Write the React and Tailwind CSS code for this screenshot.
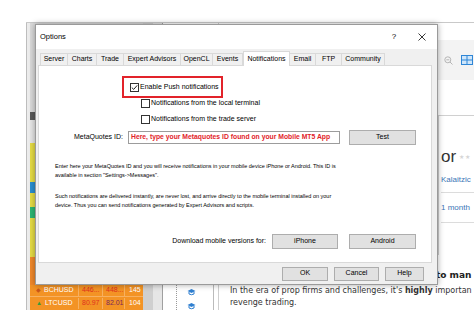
import React from "react";

const tabs = [
  { label: "Server", w: "w-[28px]" },
  { label: "Charts", w: "w-[29px]" },
  { label: "Trade", w: "w-[27px]" },
  { label: "Expert Advisors", w: "w-[57px]" },
  { label: "OpenCL", w: "w-[32px]" },
  { label: "Events", w: "w-[30px]" },
  { label: "Notifications", w: "w-[47px]", active: true },
  { label: "Email", w: "w-[26px]" },
  { label: "FTP", w: "w-[26px]" },
  { label: "Community", w: "w-[43px]" },
];

const watchRows = [
  { h: "h-[89px]", bg: "bg-[#dadada]" },
  { h: "h-[8px]", bg: "bg-[#5a5a5a]" },
  { h: "h-[23px]", bg: "bg-[#e6e6e6]" },
  { h: "h-[39px]", bg: "bg-[#e5dc45]" },
  { h: "h-[11px]", bg: "bg-[#2a8fd0]" },
  { h: "h-[14px]", bg: "bg-[#e5dc45]" },
  { h: "h-[11px]", bg: "bg-[#2bb673]" },
  { h: "h-[39px]", bg: "bg-[#e5dc45]" },
  { h: "h-[28px]", bg: "bg-[#f0882a]" },
];

function CheckBox({ checked }) {
  return (
    <span className="w-[9px] h-[9px] border border-[#333] bg-white flex items-center justify-center shrink-0">
      {checked && (
        <svg width="7" height="7" viewBox="0 0 7 7">
          <path d="M0.8 3.6 L2.7 5.4 L6.2 1.4" stroke="#222" strokeWidth="1" fill="none" />
        </svg>
      )}
    </span>
  );
}

function Btn({ children, className = "" }) {
  return (
    <div className={"flex items-center justify-center shrink-0 bg-[#e1e1e1] border border-[#adadad] text-[7px] text-black " + className}>
      {children}
    </div>
  );
}

function OptionsDialog() {
  return (
    <div className="absolute left-[35px] top-[24px] w-[403px] h-[261px] flex flex-col bg-[#f0f0f0] border border-[#9a9a9a] shadow-[0_0_6px_rgba(0,0,0,0.35)]">
      <div className="h-[24px] bg-white flex items-center pl-[4px] text-[7.5px] text-black">
        <span>Options</span>
        <span className="ml-auto w-[10px] text-center text-[8px]">?</span>
        <span className="ml-[18px] mr-[10px] w-[10px] flex justify-center">
          <svg width="8" height="8" viewBox="0 0 8 8">
            <path d="M0.5 0.5 L7.5 7.5 M7.5 0.5 L0.5 7.5" stroke="#222" strokeWidth="0.9" />
          </svg>
        </span>
      </div>

      <div className="flex-1 flex flex-col pl-[2px] pr-[5px]">
        <div className="flex items-end h-[15px] mt-[1px] pl-[2px]">
          {tabs.map((t) =>
            t.active ? (
              <div key={t.label} className={t.w + " h-[15px] -mb-[1px] bg-white border border-b-0 border-[#d9d9d9] flex items-center justify-center text-[7px] text-black relative z-10"}>
                {t.label}
              </div>
            ) : (
              <div key={t.label} className={t.w + " h-[12px] bg-[#f0f0f0] border border-l-0 first:border-l border-b-0 border-[#d9d9d9] flex items-center justify-center text-[7px] text-black"}>
                {t.label}
              </div>
            )
          )}
        </div>

        <div className="h-[198px] bg-white border border-[#d9d9d9] flex flex-col pt-[10px] text-black">
          <div className="ml-[83px] w-[101px] h-[22px] border-2 border-[#e2232a] flex items-center pl-[6px] gap-[1px] text-[7px]">
            <CheckBox checked />
            <span>Enable Push notifications</span>
          </div>
          <div className="ml-[102px] h-[10px] flex items-center gap-[1px] text-[7px]">
            <CheckBox />
            <span>Notifications from the local terminal</span>
          </div>
          <div className="ml-[102px] mt-[6px] h-[10px] flex items-center gap-[1px] text-[7px]">
            <CheckBox />
            <span>Notifications from the trade server</span>
          </div>
          <div className="mt-[6px] h-[15px] flex items-center text-[7px]">
            <span className="w-[84px] text-right">MetaQuotes ID:</span>
            <div className="ml-[5px] w-[212px] h-[13px] border border-[#9c9c9c] bg-white flex items-center pl-[2px] text-[6.8px] font-bold text-[#e2232a] whitespace-nowrap overflow-hidden">
              Here, type your Metaquotes ID found on your Mobile MT5 App
            </div>
            <Btn className="ml-[9px] w-[67px] h-[15px]">Test</Btn>
          </div>
          <p className="mt-[17px] pl-[16px] text-[5.5px] leading-[9px] whitespace-nowrap">
            Enter here your MetaQuotes ID and you will receive notifications in your mobile device iPhone or Android. This ID is
            <br />
            available in section "Settings-&gt;Messages".
          </p>
          <p className="mt-[12px] pl-[16px] text-[5.5px] leading-[9px] whitespace-nowrap">
            Such notifications are delivered instantly, are never lost, and arrive directly to the mobile terminal installed on your
            <br />
            device. Thus you can send notifications generated by Expert Advisors and scripts.
          </p>
          <div className="mt-[24px] h-[15px] flex items-center text-[7px]">
            <span className="w-[227px] text-right">Download mobile versions for:</span>
            <Btn className="ml-[6px] w-[66px] h-[15px]">iPhone</Btn>
            <Btn className="ml-[11px] w-[67px] h-[15px]">Android</Btn>
          </div>
        </div>

        <div className="flex-1 flex items-center justify-end pr-[8px] gap-[6px]">
          <Btn className="w-[46px] h-[14px] border-[#0078d7] border-[1.5px]">OK</Btn>
          <Btn className="w-[45px] h-[14px]">Cancel</Btn>
          <Btn className="w-[39px] h-[14px]">Help</Btn>
        </div>
      </div>
    </div>
  );
}

function MarketWatch() {
  return (
    <div className="w-[113px] shrink-0 flex flex-col">
      {watchRows.map((r, i) => (
        <div key={i} className={r.h + " " + r.bg} />
      ))}
      <div className="h-[12px] bg-[#f39325] grid grid-cols-[48px_24px_22px_19px] text-[7px] items-center border-b border-[#f7b060]">
        <span className="flex items-center gap-[3px] pl-[6px] text-white">
          <span className="text-[#c9561a] text-[6px]">◆</span>BCHUSD
        </span>
        <span className="pl-[3px] text-[#e0321e] border-l border-[#f7b060]">446...</span>
        <span className="pl-[3px] text-[#e0321e] border-l border-[#f7b060]">448...</span>
        <span className="pl-[4px] text-white border-l border-[#f7b060]">145</span>
      </div>
      <div className="h-[13px] bg-[#f39325] grid grid-cols-[48px_24px_22px_19px] text-[7px] items-center">
        <span className="flex items-center gap-[3px] pl-[6px] text-white">
          <span className="text-[#3a9a3a] text-[6px]">▲</span>LTCUSD
        </span>
        <span className="pl-[3px] text-[#e0321e] border-l border-[#f7b060]">80.97</span>
        <span className="pl-[3px] text-[#7a2a5a] border-l border-[#f7b060]">82.01</span>
        <span className="pl-[4px] text-white border-l border-[#f7b060]">104</span>
      </div>
    </div>
  );
}

function Cap() {
  return (
    <svg width="9" height="8" viewBox="0 0 9 8">
      <path d="M0.5 3 L4.5 1 L8.5 3 L4.5 5 Z" fill="#2f7fd0" />
      <path d="M2 4 L2 6 Q4.5 7.5 7 6 L7 4" fill="none" stroke="#2f7fd0" strokeWidth="1" />
    </svg>
  );
}

export default function App() {
  return (
    <div className="relative w-[474px] h-[310px] overflow-hidden bg-white font-['Liberation_Sans',Arial,sans-serif]">
      <div className="flex flex-col h-full">
        <div className="h-[22px]" />
        <div className="flex flex-1 min-h-0 ml-[26px] border-t border-[#c9c9c9]">
          <div className="flex w-[192px] shrink-0 border-l border-[#bdbdbd]">
            <div className="w-[3px] shrink-0 bg-[#ececec]" />
            <MarketWatch />
            <div className="w-[10px] shrink-0 bg-[#cfcfcf]" />
            <div className="w-[10px] shrink-0 bg-[#e6e6e6] border-r border-[#a0a0a0]" />
            <div className="flex-1 flex flex-col justify-end bg-white">
              <div className="flex h-[25px]">
                <div className="ml-[13px] w-[1px] border-l border-dotted border-[#999]" />
                <div className="ml-[10px] flex flex-col gap-[6px] pt-[3px]">
                  <Cap />
                  <Cap />
                </div>
                <div className="ml-auto mr-[4px] w-[1px] bg-[#bbb]" />
              </div>
            </div>
          </div>

          <div className="flex-1 min-w-0 overflow-hidden flex flex-col border-l border-[#cfcfcf]">
            <div className="h-[17px] shrink-0" />
            <div className="h-[40px] shrink-0 bg-[#f3f3f3] flex items-center pl-[225px] gap-[8px]">
              <svg width="9" height="9" viewBox="0 0 9 9" className="shrink-0">
                <circle cx="3.8" cy="3.8" r="3" fill="none" stroke="#b5b5b5" strokeWidth="1" />
                <path d="M2.3 3.8 H5.3 M6 6 L8.5 8.5" stroke="#b5b5b5" strokeWidth="1" />
              </svg>
              <svg width="12" height="10" viewBox="0 0 12 10" className="shrink-0">
                <rect x="0.5" y="0.5" width="11" height="9" fill="#cfe6fa" stroke="#2f86d6" />
                <path d="M6 0.5 V9.5 M0.5 5 H11.5" stroke="#2f86d6" />
              </svg>
            </div>
            <div className="h-[35px] shrink-0" />
            <div className="ml-[219px] w-[40px] h-[140px] shrink-0 border-t border-l border-[#d0d0d0] flex flex-col pl-[2px]">
              <div className="mt-[33px] flex items-center gap-[3px] whitespace-nowrap">
                <span className="text-[17px] leading-[16px] text-[#333]">or</span>
                <span className="text-[6px] text-[#d6d6d6] tracking-[1px]">★★</span>
              </div>
              <div className="mt-[9px] text-[8px] text-[#3b76b6] whitespace-nowrap">Kalaitzic</div>
              <div className="mt-[6px] h-px bg-[#dcdcdc]" />
              <div className="mt-[9px] text-[8px] text-[#3b76b6] whitespace-nowrap">1 month</div>
              <div className="mt-[8px] h-px bg-[#dcdcdc]" />
            </div>
            <div className="mt-[14px] pl-[217px] text-[9px] leading-[12px] font-bold text-[#222] whitespace-nowrap font-['DejaVu_Sans',sans-serif]">
              to man
            </div>
            <p className="mt-[4px] pl-[11px] text-[8px] leading-[12px] text-[#333] whitespace-nowrap font-['DejaVu_Sans',sans-serif]">
              In the era of prop firms and challenges, it's <b>highly</b> importan
              <br />
              revenge trading.
            </p>
          </div>
        </div>
      </div>
      <OptionsDialog />
    </div>
  );
}
